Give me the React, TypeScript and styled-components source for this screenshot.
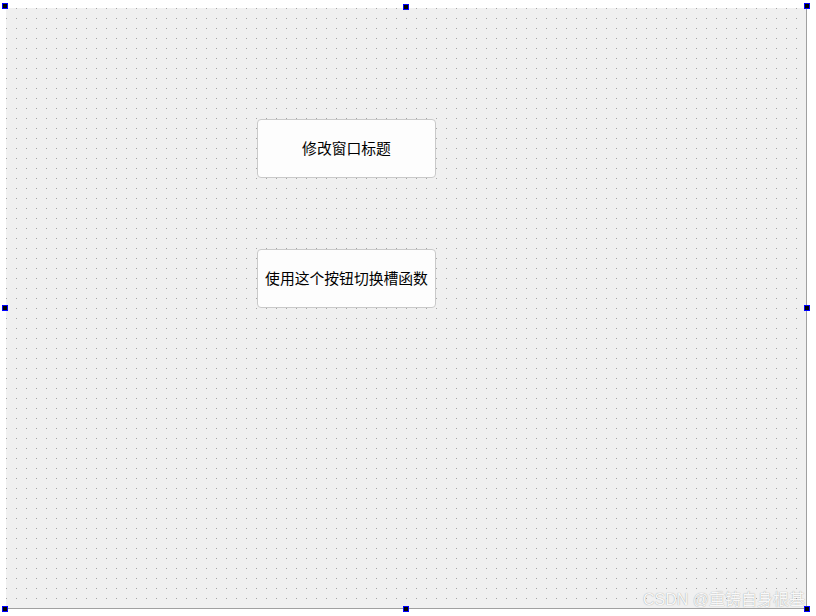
import React from "react";
import styled, { createGlobalStyle } from "styled-components";

const GlobalStyle = createGlobalStyle`
  html, body {
    margin: 0;
    padding: 0;
    background: #ffffff;
  }
  body {
    font-family: "Noto Sans CJK SC", "Noto Sans", sans-serif;
  }
`;

const Page = styled.div`
  position: relative;
  width: 816px;
  height: 616px;
  padding: 8px 0 0 6px;
  box-sizing: border-box;
  overflow: hidden;
`;

const Form = styled.div`
  position: relative;
  width: 801px;
  height: 601px;
  box-sizing: border-box;
  border-right: 1px solid #a0a0a0;
  border-bottom: 1px solid #a0a0a0;
  background-color: #f0f0f0;
  background-image: conic-gradient(from 270deg at 1px 1px, #a4a4a4 90deg, transparent 0);
  background-size: 10px 10px;
  background-position: 0 0;
`;

const PushButton = styled.button<{ $top: number }>`
  position: absolute;
  left: 251px;
  top: ${(p) => p.$top}px;
  width: 179px;
  height: 59px;
  padding: 0;
  box-sizing: border-box;
  border: 1px solid #c9c9c9;
  border-radius: 4px;
  background: #fdfdfd;
  color: #000;
  font-family: "Noto Sans CJK SC", "Noto Sans", sans-serif;
  font-size: 14.8px;
  line-height: 1;
  cursor: default;
`;

const Handle = styled.div<{ $x: number; $y: number }>`
  position: absolute;
  left: ${(p) => p.$x}px;
  top: ${(p) => p.$y}px;
  width: 6px;
  height: 6px;
  box-sizing: border-box;
  border: 1px solid #0000ff;
  background: #000;
`;

const Watermark = styled.div`
  position: absolute;
  right: 11px;
  bottom: 8px;
  font-family: "Liberation Sans", "Noto Sans CJK SC", sans-serif;
  font-size: 16px;
  line-height: 1;
  color: #f8f8f8;
  white-space: nowrap;
  text-shadow: 0 0 1px #8e8e8e;
  pointer-events: none;
`;

const handles = [
  [2, 3], [403, 4], [804, 3],
  [2, 305], [804, 305],
  [2, 606], [403, 606], [804, 606],
];

export default function App() {
  return (
    <>
      <GlobalStyle />
      <Page>
        <Form>
          <PushButton $top={111}>修改窗口标题</PushButton>
          <PushButton $top={241}>使用这个按钮切换槽函数</PushButton>
        </Form>
        {handles.map(([x, y]) => (
          <Handle key={`${x}-${y}`} $x={x} $y={y} />
        ))}
        <Watermark>CSDN @重铸自身根基</Watermark>
      </Page>
    </>
  );
}
